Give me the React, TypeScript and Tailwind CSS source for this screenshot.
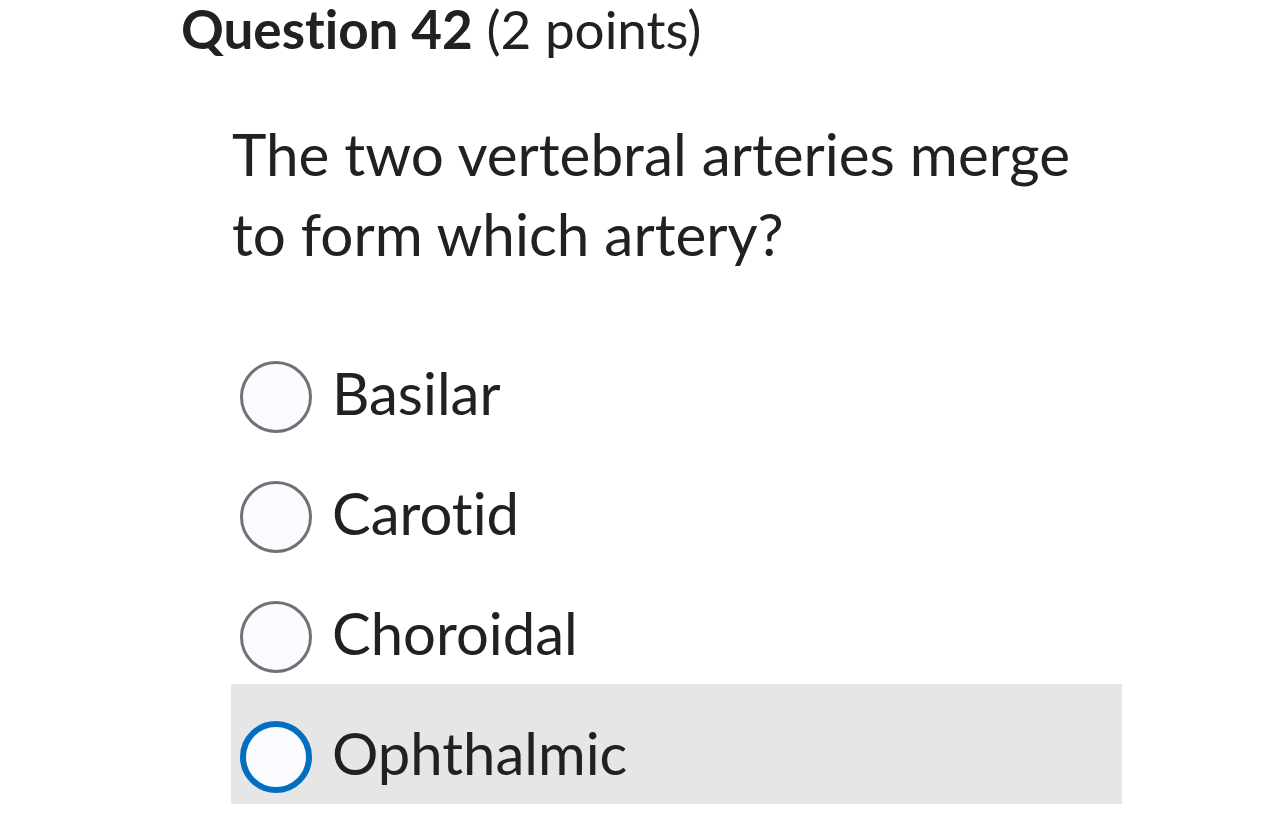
import React, { useState } from 'react';

const options = ['Basilar', 'Carotid', 'Choroidal', 'Ophthalmic'];

export default function App() {
  const [selected, setSelected] = useState('Ophthalmic');

  return (
    <div
      className="w-[1284px] h-[836px] bg-white text-[#202122] overflow-hidden [font-variant-ligatures:none]"
      style={{ fontFamily: 'Lato, "Open Sans", sans-serif' }}
    >
      {/* Header */}
      <h2 className="pl-[181px] text-[53px] leading-[58px]">
        <span className="font-bold">Question 42</span> <span className="font-normal">(2 points)</span>
      </h2>

      {/* Question text */}
      <p className="pl-[232px] pt-[55px] text-[58.4px] leading-[80px] w-[1120px]">
        The two vertebral arteries merge to form which artery?
      </p>

      {/* Answers */}
      <ul className="ml-[231px] mt-[51px] w-[891px] flex flex-col">
        {options.map((opt) => {
          const isSel = selected === opt;
          return (
            <li key={opt}>
              <button
                onClick={() => setSelected(opt)}
                className={`w-full h-[120px] flex items-start pt-[37px] pl-[9px] text-left ${isSel ? 'bg-[#e6e6e6]' : 'bg-white'}`}
              >
                <span
                  className={`w-[72px] h-[72px] rounded-full bg-[#f9fbff] flex-shrink-0 ${isSel ? 'border-[6px] border-[#006fbf]' : 'border-[3px] border-[#6f7274]'}`}
                />
                <span className="ml-[20px] text-[58px] leading-[64px]">{opt}</span>
              </button>
            </li>
          );
        })}
      </ul>
    </div>
  );
}
